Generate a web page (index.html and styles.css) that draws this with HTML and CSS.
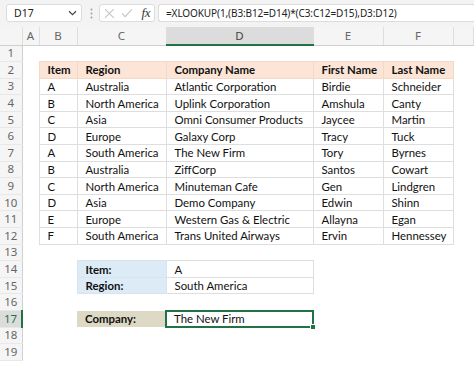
FILE: index.html
```html
<!DOCTYPE html>
<html lang="en">
<head>
    <meta charset="UTF-8">
    <meta name="viewport" content="width=device-width, initial-scale=1.0">
    <title>XLOOKUP with multiple criteria</title>
    <link rel="stylesheet" href="styles.css">
</head>
<body>
    <div class="formula-bar">
        <div class="name-box">
            <span>D17</span>
            <svg width="9" height="6" viewBox="0 0 9 6"><path d="M1 1.2 L4.5 4.6 L8 1.2" fill="none" stroke="#444" stroke-width="1.2"/></svg>
        </div>
        <svg class="grip" width="3" height="11" viewBox="0 0 3 11"><circle cx="1.5" cy="1.5" r="0.9" fill="#999"/><circle cx="1.5" cy="5.5" r="0.9" fill="#999"/><circle cx="1.5" cy="9.5" r="0.9" fill="#999"/></svg>
        <div class="fx-box">
            <svg width="11" height="11" viewBox="0 0 11 11"><path d="M1 1 L10 10 M10 1 L1 10" stroke="#c4c4c4" stroke-width="1.1" fill="none"/></svg>
            <svg width="12" height="10" viewBox="0 0 12 10"><path d="M1 5.5 L4.2 8.7 L11 1.2" stroke="#c4c4c4" stroke-width="1.1" fill="none"/></svg>
            <span class="fx">fx</span>
        </div>
        <div class="formula">=XLOOKUP(1,(B3:B12=D14)*(C3:C12=D15),D3:D12)</div>
    </div>

    <table class="sheet">
        <colgroup>
            <col class="c-rh">
            <col class="c-a">
            <col class="c-b">
            <col class="c-c">
            <col class="c-d">
            <col class="c-e">
            <col class="c-f">
            <col>
        </colgroup>
        <thead>
            <tr>
                <th class="corner"></th>
                <th>A</th>
                <th>B</th>
                <th>C</th>
                <th class="active">D</th>
                <th>E</th>
                <th>F</th>
                <th></th>
            </tr>
        </thead>
        <tbody>
            <tr><th>1</th><td></td><td></td><td></td><td></td><td></td><td></td><td></td></tr>
            <tr><th>2</th><td></td><td class="hd">Item</td><td class="hd">Region</td><td class="hd">Company Name</td><td class="hd">First Name</td><td class="hd">Last Name</td><td></td></tr>
            <tr><th>3</th><td></td><td class="box">A</td><td class="box">Australia</td><td class="box">Atlantic Corporation</td><td class="box">Birdie</td><td class="box">Schneider</td><td></td></tr>
            <tr><th>4</th><td></td><td class="box">B</td><td class="box">North America</td><td class="box">Uplink Corporation</td><td class="box">Amshula</td><td class="box">Canty</td><td></td></tr>
            <tr><th>5</th><td></td><td class="box">C</td><td class="box">Asia</td><td class="box">Omni Consumer Products</td><td class="box">Jaycee</td><td class="box">Martin</td><td></td></tr>
            <tr><th>6</th><td></td><td class="box">D</td><td class="box">Europe</td><td class="box">Galaxy Corp</td><td class="box">Tracy</td><td class="box">Tuck</td><td></td></tr>
            <tr><th>7</th><td></td><td class="box">A</td><td class="box">South America</td><td class="box">The New Firm</td><td class="box">Tory</td><td class="box">Byrnes</td><td></td></tr>
            <tr><th>8</th><td></td><td class="box">B</td><td class="box">Australia</td><td class="box">ZiffCorp</td><td class="box">Santos</td><td class="box">Cowart</td><td></td></tr>
            <tr><th>9</th><td></td><td class="box">C</td><td class="box">North America</td><td class="box">Minuteman Cafe</td><td class="box">Gen</td><td class="box">Lindgren</td><td></td></tr>
            <tr><th>10</th><td></td><td class="box">D</td><td class="box">Asia</td><td class="box">Demo Company</td><td class="box">Edwin</td><td class="box">Shinn</td><td></td></tr>
            <tr><th>11</th><td></td><td class="box">E</td><td class="box">Europe</td><td class="box">Western Gas &amp; Electric</td><td class="box">Allayna</td><td class="box">Egan</td><td></td></tr>
            <tr><th>12</th><td></td><td class="box">F</td><td class="box">South America</td><td class="box">Trans United Airways</td><td class="box">Ervin</td><td class="box">Hennessey</td><td></td></tr>
            <tr><th>13</th><td></td><td></td><td></td><td></td><td></td><td></td><td></td></tr>
            <tr><th>14</th><td></td><td></td><td class="lbl-blue">Item:</td><td class="box">A</td><td></td><td></td><td></td></tr>
            <tr><th>15</th><td></td><td></td><td class="lbl-blue">Region:</td><td class="box">South America</td><td></td><td></td><td></td></tr>
            <tr><th>16</th><td></td><td></td><td></td><td></td><td></td><td></td><td></td></tr>
            <tr><th class="active">17</th><td></td><td></td><td class="lbl-tan">Company:</td><td class="selected">The New Firm</td><td></td><td></td><td></td></tr>
            <tr><th>18</th><td></td><td></td><td></td><td></td><td></td><td></td><td></td></tr>
            <tr><th>19</th><td></td><td></td><td></td><td></td><td></td><td></td><td></td></tr>
        </tbody>
    </table>
</body>
</html>
```

FILE: styles.css
```css
body {
    margin: 0;
    background-color: #fff;
    font-family: Lato, "Liberation Sans", sans-serif;
    color: #111;
    overflow: hidden;
}

/* formula bar */
.formula-bar {
    display: flex;
    align-items: flex-start;
    height: 27px;
    box-sizing: border-box;
    padding: 4px 0 0 6px;
    background-color: #f3f3f3;
}
.name-box {
    display: flex;
    align-items: center;
    justify-content: space-between;
    width: 76px;
    height: 18px;
    box-sizing: border-box;
    padding: 0 4px 0 7px;
    background-color: #fff;
    border: 1px solid #dcdcdc;
    border-radius: 3px;
    font-family: "Noto Sans", sans-serif;
    font-size: 10.5px;
    color: #222;
}
.grip {
    margin: 4px 6px 0 8px;
}
.fx-box {
    display: flex;
    align-items: center;
    gap: 6px;
    width: 56px;
    height: 18px;
    box-sizing: border-box;
    padding: 0 4px 0 4px;
    background-color: #fff;
    border: 1px solid #dcdcdc;
    border-radius: 3px;
}
.fx {
    font-family: "Liberation Serif", serif;
    font-style: italic;
    font-size: 13px;
    color: #333;
    margin-left: 3px;
    letter-spacing: -0.5px;
}
.formula {
    flex: 1;
    height: 18px;
    box-sizing: border-box;
    margin-left: 3px;
    padding: 1px 0 0 7px;
    background-color: #fff;
    border: 1px solid #dcdcdc;
    border-right: none;
    border-radius: 3px 0 0 3px;
    font-family: "Noto Sans", sans-serif;
    font-size: 10px;
    letter-spacing: -0.1px;
    line-height: 14px;
    color: #222;
    white-space: nowrap;
}

/* sheet grid */
.sheet {
    width: 474px;
    table-layout: fixed;
    border-collapse: collapse;
    font-size: 11.4px;
}
.c-rh { width: 22px; }
.c-a { width: 17px; }
.c-b { width: 38px; }
.c-c { width: 89px; }
.c-d { width: 147px; }
.c-e { width: 70px; }
.c-f { width: 70px; }

.sheet thead tr {
    height: 18px;
}
.sheet thead th {
    padding: 0;
    background-color: #f5f5f5;
    border-right: 1px solid #dedede;
    border-bottom: 1px solid #d0d0d0;
    font-family: "Noto Sans", sans-serif;
    font-weight: normal;
    font-size: 11.5px;
    color: #666;
    line-height: 14px;
}
.sheet thead th.active {
    background-color: #dcdcdc;
    border-bottom: 2px solid #217346;
    color: #444;
}

.sheet tbody tr {
    height: 16.6px;
}
.sheet tbody th {
    padding: 0;
    background-color: #f5f5f5;
    border-right: 1px solid #d0d0d0;
    border-bottom: 1px solid #e8e8e8;
    font-family: "Noto Sans", sans-serif;
    font-weight: normal;
    font-size: 11.5px;
    color: #666;
    line-height: 14px;
}
.sheet tbody th.active {
    background-color: #dcdcdc;
    border-right: 2px solid #217346;
    color: #217346;
}
.sheet td {
    padding: 0 0 0 8px;
    line-height: 13px;
    white-space: nowrap;
    overflow: hidden;
}

.sheet td.hd {
    background-color: #fce4d6;
    border: 1px solid #f4d9c8;
    font-weight: bold;
}
.sheet td.box {
    border: 1px solid #dedede;
}
.sheet td.lbl-blue {
    background-color: #ddebf7;
    border: 1px solid #d6e4ef;
    font-weight: bold;
}
.sheet td.lbl-tan {
    background-color: #ddd9c4;
    font-weight: bold;
}
.sheet td.selected {
    position: relative;
    overflow: visible;
    outline: 2px solid #217346;
    outline-offset: -1px;
}
.sheet td.selected::after {
    content: "";
    position: absolute;
    right: -3px;
    bottom: -3px;
    width: 4px;
    height: 4px;
    background-color: #217346;
    border: 1px solid #fff;
}
```
